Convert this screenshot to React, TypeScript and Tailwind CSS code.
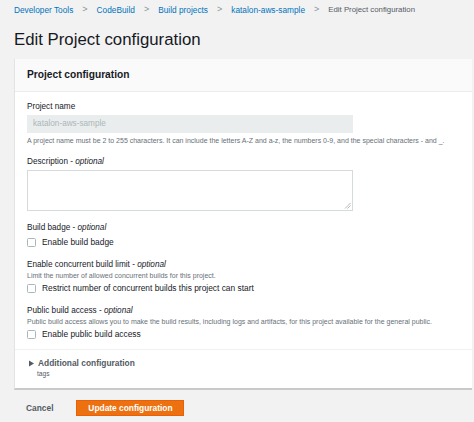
import React from "react";

const Sep = () => <span className="text-[#879596] mx-[9px] text-[9px]">&gt;</span>;

const Check = ({ label }: { label: string }) => (
  <div className="flex items-center h-[10px] leading-[10px]">
    <span className="w-[9px] h-[9px] border border-[#aab7b8] rounded-[1.5px] bg-white shrink-0" />
    <span className="ml-[6px] text-[8.4px] text-[#16191f]">{label}</span>
  </div>
);

const Label = ({ text, className = "" }: { text: string; className?: string }) => (
  <div className={"text-[8.2px] leading-[10px] text-[#16191f] " + className}>
    {text} - <i className="italic">optional</i>
  </div>
);

const Help = ({ text, className = "" }: { text: string; className?: string }) => (
  <div className={"text-[7px] leading-[8px] text-[#687078] " + className}>{text}</div>
);

export default function App() {
  return (
    <div className="w-[474px] h-[422px] overflow-hidden bg-[#f2f2f2] pl-[14px] pr-[2px] font-['Liberation_Sans',Arial,sans-serif]">
      <div className="h-[20px] flex items-center text-[8.3px] whitespace-nowrap">
        <span className="text-[#0073bb]">Developer Tools</span>
        <Sep />
        <span className="text-[#0073bb]">CodeBuild</span>
        <Sep />
        <span className="text-[#0073bb]">Build projects</span>
        <Sep />
        <span className="text-[#0073bb]">katalon-aws-sample</span>
        <Sep />
        <span className="text-[#545b64] text-[7.8px]">Edit Project configuration</span>
      </div>
      <div className="h-[39px] flex items-center text-[16.8px] text-[#16191f]">Edit Project configuration</div>
      <div className="bg-white border-l border-[#e3e3e3] border-b-2 border-b-[#c9c9c9]">
        <div className="h-[33px] bg-[#fafafa] border-b border-[#eaeded] px-[12px] flex items-center text-[10.2px] font-bold text-[#16191f]">
          Project configuration
        </div>
        <div className="px-[12px]">
          <div className="mt-[10px] text-[8.2px] leading-[10px] text-[#16191f]">Project name</div>
          <div className="mt-[3px] w-[326px] h-[18px] bg-[#eaeded] flex items-center px-[6px] text-[8.2px] text-[#aab7b8]">
            katalon-aws-sample
          </div>
          <Help
            className="mt-[4px] whitespace-nowrap"
            text="A project name must be 2 to 255 characters. It can include the letters A-Z and a-z, the numbers 0-9, and the special characters - and _."
          />
          <Label className="mt-[12px]" text="Description" />
          <div className="relative mt-[3px] w-[326px] h-[41px] border border-[#d5dbdb] bg-white">
            <svg className="absolute right-[1px] bottom-[1px]" width="7" height="7" viewBox="0 0 7 7">
              <path d="M6.5 1 L1 6.5 M6.5 3.5 L3.5 6.5" stroke="#9a9a9a" strokeWidth="0.7" />
            </svg>
          </div>
          <Label className="mt-[12px]" text="Build badge" />
          <div className="mt-[4px]">
            <Check label="Enable build badge" />
          </div>
          <Label className="mt-[13px]" text="Enable concurrent build limit" />
          <Help className="mt-[2px]" text="Limit the number of allowed concurrent builds for this project." />
          <div className="mt-[3px]">
            <Check label="Restrict number of concurrent builds this project can start" />
          </div>
          <Label className="mt-[13px]" text="Public build access" />
          <Help
            className="mt-[2px] whitespace-nowrap"
            text="Public build access allows you to make the build results, including logs and artifacts, for this project available for the general public."
          />
          <div className="mt-[3px]">
            <Check label="Enable public build access" />
          </div>
        </div>
        <div className="mt-[10px] border-t border-[#f0f0f0] px-[12px] pb-[10px]">
          <div className="mt-[8px] flex items-center h-[10px] leading-[10px]">
            <svg width="7" height="7" viewBox="0 0 7 7" className="ml-[1px]">
              <path d="M1 0.5 L6 3.5 L1 6.5 Z" fill="#545b64" />
            </svg>
            <span className="ml-[3px] text-[8.4px] font-bold text-[#545b64]">Additional configuration</span>
          </div>
          <div className="mt-[2px] ml-[10px] text-[6.6px] leading-[8px] text-[#545b64]">tags</div>
        </div>
      </div>
      <div className="mt-[10px] h-[16px] flex items-center pl-[12px]">
        <span className="text-[8.4px] font-bold text-[#545b64]">Cancel</span>
        <div className="ml-[23px] w-[108px] h-[16px] bg-[#ec7211] border border-[#eb5f07] flex items-center justify-center text-[8.4px] font-bold text-white">
          Update configuration
        </div>
      </div>
    </div>
  );
}
